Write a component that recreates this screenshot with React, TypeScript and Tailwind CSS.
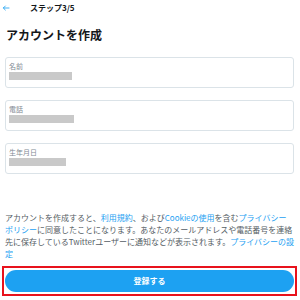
import React from 'react';

const font = { fontFamily: '"Noto Sans CJK JP", "Noto Sans", sans-serif' };

const Field: React.FC<{ label: string; bar: string }> = ({ label, bar }) => (
  <div className="ml-[5px] mr-[6px] h-[31px] rounded-[3px] border border-[#dbe3e8] px-[3px] pt-[3px]">
    <div className="text-[7px] leading-[10px] text-[#7f8a93]">{label}</div>
    <div className={`mt-[1px] h-[8px] bg-[#c9c9c9] ${bar}`} />
  </div>
);

const App: React.FC = () => {
  return (
    <div className="w-[300px] h-[300px] overflow-hidden bg-white" style={font}>
      {/* Header */}
      <div className="flex h-[15px] items-center pl-[2px]">
        <svg width="8" height="8" viewBox="0 0 24 24" fill="none" stroke="#1da1f2" strokeWidth="2.5" strokeLinecap="round" strokeLinejoin="round">
          <path d="M21 12H4M10 6l-6 6 6 6" />
        </svg>
        <span className="ml-[20px] text-[8px] font-bold leading-none text-[#14171a]">ステップ3/5</span>
      </div>

      {/* Title */}
      <h1 className="ml-[6px] mt-[13px] text-[12px] font-bold leading-[14px] text-[#14171a]">アカウントを作成</h1>

      <div className="mt-[15px] flex flex-col gap-[12px]">
        <Field label="名前" bar="w-[63px]" />
        <Field label="電話" bar="w-[65px]" />
        <Field label="生年月日" bar="w-[57px]" />
      </div>

      {/* Terms */}
      <p className="mt-[38px] pl-[5px] pr-[3px] text-[8px] leading-[12px] text-[#555d64] whitespace-nowrap">
        アカウントを作成すると、<span className="text-[#1da1f2]">利用規約</span>、および<span className="text-[#1da1f2]">Cookieの使用</span>を含む<span className="text-[#1da1f2]">プライバシー</span>
        <br />
        <span className="text-[#1da1f2]">ポリシー</span>に同意したことになります。あなたのメールアドレスや電話番号を連絡
        <br />
        先に保存しているTwitterユーザーに通知などが表示されます。<span className="text-[#1da1f2]">プライバシーの設</span>
        <br />
        <span className="text-[#1da1f2]">定</span>
      </p>

      {/* Register button */}
      <div className="mt-[6px] ml-[2px] mr-[3px] border-2 border-[#e8121c] px-[1px] py-[2px]">
        <button className="flex h-[22px] w-full items-center justify-center rounded-full bg-[#1da1f2] text-[8px] font-bold text-white">
          登録する
        </button>
      </div>
    </div>
  );
};

export default App;
